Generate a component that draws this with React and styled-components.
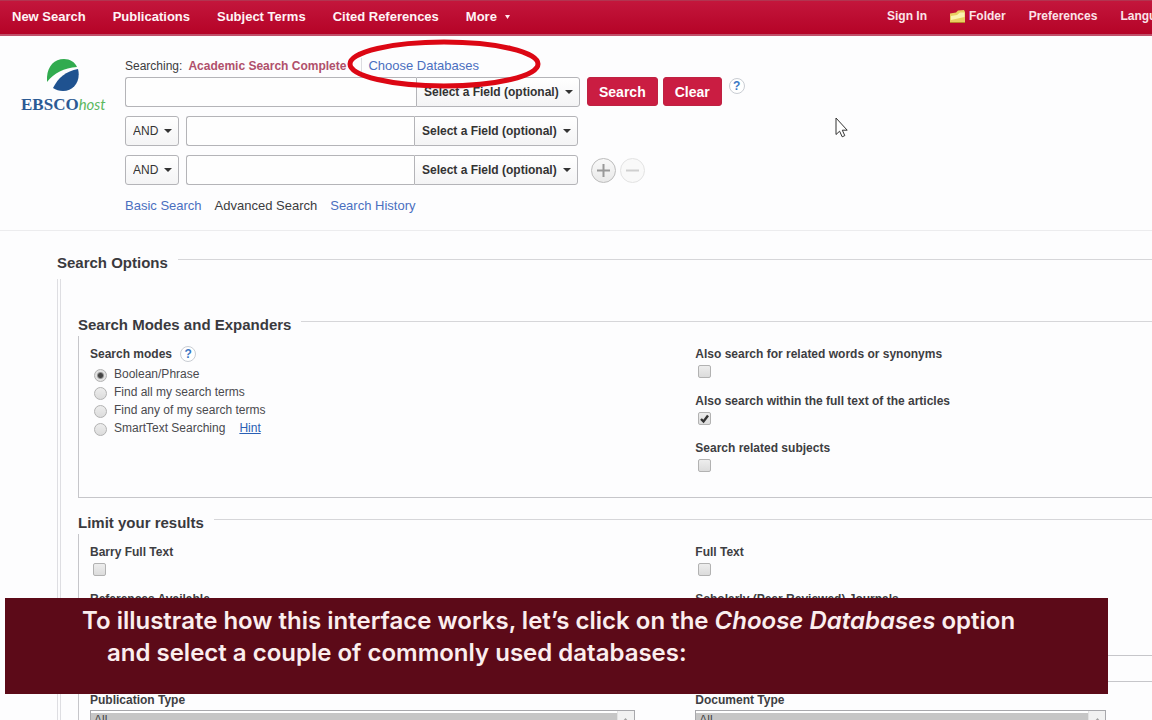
import React from "react";
import styled, { createGlobalStyle, css } from "styled-components";

const GlobalStyle = createGlobalStyle`
  *, *::before, *::after { box-sizing: border-box; }
  html { overflow-x: hidden; scrollbar-width: none; }
  body {
    margin: 0;
    background: #fdfdfe;
    color: #3c3c40;
    font-family: "Liberation Sans", Arial, sans-serif;
    font-size: 12px;
    line-height: 16px;
  }
  a { text-decoration: none; }
`;

const Page = styled.div`
  position: relative;
  overflow: hidden;
`;

const TopBar = styled.header`
  display: flex;
  height: 36px;
  padding-left: 12px;
  border-top: 1px solid #b23450;
  border-bottom: 2px solid #c0506a;
  background: linear-gradient(#c3163c, #b50327);
  white-space: nowrap;
  overflow: hidden;
`;

const MainNav = styled.nav`
  display: flex;
  flex: 1;
  align-items: center;
  gap: 27px;
  padding-bottom: 2px;
`;

const UserNav = styled.nav`
  display: flex;
  flex: none;
  align-items: center;
  gap: 23px;
  width: 265px;
  padding-bottom: 3px;
`;

const NavLink = styled.a`
  display: inline-flex;
  align-items: center;
  gap: ${(p) => (p.$small ? "4px" : "8px")};
  color: ${(p) => (p.$small ? "#fbe3e8" : "#fff4f6")};
  font-size: ${(p) => (p.$small ? "12px" : "13px")};
  font-weight: bold;
`;

const SearchArea = styled.section`
  display: flex;
  padding: 22px 0 16px;
  border-bottom: 1px solid #ececee;
`;

const LogoColumn = styled.div`
  flex: none;
  width: 125px;
  padding-left: 21px;
`;

const LogoText = styled.div`
  color: #2b5a94;
  font: bold 17px/20px "Liberation Serif", serif;
  white-space: nowrap;

  i {
    color: #5cb85f;
    font: italic 15px/20px Lato, sans-serif;
  }
`;

const LogoMark = styled.svg`
  display: block;
  margin: 0 0 3px 26px;
`;

const SearchForm = styled.form`
  display: flex;
  flex-direction: column;
`;

const SourceLine = styled.div`
  display: flex;
  margin-bottom: 3px;
  white-space: nowrap;

  b {
    margin-left: 6px;
    color: #b0506b;
  }
`;

const ChooseSlot = styled.span`
  position: relative;
  margin-left: 15px;
  padding-left: 6px;
  border-left: 1px solid #dcdce0;
`;

const Highlight = styled.svg`
  position: absolute;
  z-index: 2;
  left: -15px;
  top: -19px;
  pointer-events: none;
`;

const TextLink = styled.a`
  color: #4a6fc0;
  font-size: 13px;
`;

const QueryRows = styled.div`
  display: flex;
  flex-direction: column;
  gap: 9px;
`;

const QueryRow = styled.div`
  display: flex;
  height: 30px;
`;

const box = css`
  height: 30px;
  border: 1px solid #b4b4b8;
  font-family: inherit;
  font-size: 12px;
`;

const TermInput = styled.input`
  ${box}
  width: ${(p) => (p.$wide ? "291px" : "228px")};
  padding: 0 6px;
  border-right: 0;
  border-radius: 3px 0 0 3px;
  background: #fefefe;
  outline: none;
`;

const SelectWrap = styled.span`
  position: relative;
  display: inline-block;
  margin-right: 7px;

  &::after {
    content: "";
    position: absolute;
    right: 7px;
    top: 13px;
    border: 4px solid transparent;
    border-top-color: #333;
    border-bottom: 0;
    pointer-events: none;
  }
`;

const FieldSelect = styled.select`
  ${box}
  display: block;
  width: 164px;
  padding: 0 0 0 7px;
  border-radius: 0 3px 3px 0;
  background: linear-gradient(#fff, #f4f4f5);
  color: #333;
  font-weight: bold;
  appearance: none;
`;

const BoolSelect = styled(FieldSelect)`
  width: 54px;
  border-radius: 3px;
  font-weight: normal;
`;

const ActionButton = styled.button`
  height: 29px;
  margin-right: 5px;
  padding: 0 11px;
  border: 1px solid #bf2242;
  border-radius: 3px;
  background: #ca1d42;
  color: #fff;
  font: bold 14px/20px "Liberation Sans", Arial, sans-serif;
`;

const HelpButton = styled.button`
  flex: none;
  width: 16px;
  height: 16px;
  margin: ${(p) => (p.$inline ? "0 0 0 8px" : "1px 0 0 2px")};
  padding: 0;
  border: 1px solid #c9cdd3;
  border-radius: 50%;
  background: #fff;
  color: #3c78c4;
  font: bold 12px/14px "Liberation Sans", Arial, sans-serif;
`;

const RoundButton = styled.button`
  width: 25px;
  height: 25px;
  margin: 3px 4px 0 0;
  padding: 0;
  border: 1px solid ${(p) => (p.disabled ? "#e3e3e3" : "#bcbcbc")};
  border-radius: 50%;
  background: ${(p) => (p.disabled ? "#f9f9f9" : "linear-gradient(#f9f9f9, #e9e9e9)")};
  color: ${(p) => (p.disabled ? "#cfcfcf" : "#999")};

  svg { display: block; margin: auto; }
`;

const RoundButtons = styled.div`
  display: flex;
  margin-left: 6px;
`;

const ModeLinks = styled.nav`
  display: flex;
  gap: 13px;
  margin-top: 13px;
  font-size: 13px;
`;

const CurrentMode = styled.span`
  color: #3c3c40;
`;

const Options = styled.main`
  padding: 21px 0 0 57px;
`;

const OptionsBody = styled.div`
  margin-top: 5px;
  padding: 35px 0 0 17px;
  border-left: 4px double #dedee2;
`;

const Heading = styled.h2`
  display: flex;
  gap: 10px;
  margin: ${(p) => (p.$spaced ? "14px" : "0")} 0 0;
  color: #3a3a3e;
  font-size: 15px;
  line-height: 22px;

  &::after {
    content: "";
    flex: 1;
    height: 1px;
    margin-top: 7px;
    background: #d6d6d9;
  }
`;

const Panel = styled.section`
  display: grid;
  grid-template-columns: 57fr 43fr;
  margin-top: ${(p) => (p.$topLine ? "25px" : "0")};
  padding: 10px 0 ${(p) => p.$bottom || "25px"} 11px;
  border: solid #c6c6ca;
  border-width: ${(p) => (p.$topLine ? "1px 0 0 1px" : "0 0 1px 1px")};
`;

const Column = styled.div`
  display: flex;
  flex-direction: column;
  gap: ${(p) => (p.$tight ? "3px" : "15px")};
  min-width: 0;
`;

const Label = styled.label`
  display: block;
  color: #3e3e42;
  font-weight: bold;
`;

const TitleRow = styled.div`
  display: flex;
  font-weight: bold;
`;

const choice = css`
  display: block;
  appearance: none;
  width: 13px;
  height: 13px;
  border: 1px solid #b2b2b2;
  background: linear-gradient(#ededed, #dcdcdc);
`;

const CheckInput = styled.input.attrs({ type: "checkbox" })`
  ${choice}
  margin: 0;
  border-radius: 2px;
`;

const CheckBox = styled.span`
  position: relative;
  display: block;
  width: 13px;
  margin: 3px 0 0 3px;

  svg {
    position: absolute;
    left: 0;
    top: 0;
    display: none;
    pointer-events: none;
  }
  input:checked + svg { display: block; }
`;

const RadioInput = styled.input.attrs({ type: "radio" })`
  ${choice}
  margin: 2px 7px 0 4px;
  border-radius: 50%;

  &:checked {
    background: radial-gradient(circle, #444 0 2px, #e2e2e2 4px);
  }
`;

const RadioList = styled.div`
  display: flex;
  flex-direction: column;
`;

const RadioRow = styled.div`
  display: flex;
  align-items: center;
  height: 18px;
  color: #4a4a4e;
`;

const HintLink = styled.a`
  margin-left: 14px;
  color: #2a5fb4;
  text-decoration: underline;
`;

const ListBox = styled.div`
  display: flex;
  width: 90%;
  height: 70px;
  margin-top: 2px;
  border: 1px solid #a8a8ac;
  background: #fff;
`;

const List = styled.select`
  flex: 1;
  min-width: 0;
  padding: 2px 0 0;
  border: 0;
  background: #fff;
  font: 12px/16px "Liberation Sans", Arial, sans-serif;
  scrollbar-width: none;

  option {
    padding: 0 3px;
    background: #c6c6c6;
    color: #444;
  }
`;

const ScrollButton = styled.button`
  display: flex;
  justify-content: center;
  width: 17px;
  padding: 7px 0 0;
  border: 0;
  border-left: 1px solid #e2e2e2;
  background: #f1f1f1;
`;

const Caption = styled.aside`
  position: fixed;
  z-index: 3;
  left: 5px;
  right: 44px;
  bottom: 26px;
  padding: 7px 40px 25px 102px;
  background: #5c0a18;
  color: #fbeeee;
  font: 600 24px/32px Inter, sans-serif;

  p {
    margin: 0;
    text-indent: -25px;
  }
`;

const Pointer = styled.svg`
  position: absolute;
  left: 835px;
  top: 117px;
`;

function FieldPicker({ id }) {
  return (
    <SelectWrap>
      <FieldSelect id={id} aria-label="Select a Field">
        <option>Select a Field (optional)</option>
      </FieldSelect>
    </SelectWrap>
  );
}

function BoolPicker() {
  return (
    <SelectWrap>
      <BoolSelect aria-label="Operator">
        <option>AND</option>
      </BoolSelect>
    </SelectWrap>
  );
}

function Check({ id, label, checked }) {
  return (
    <div>
      <Label htmlFor={id}>{label}</Label>
      <CheckBox>
        <CheckInput id={id} defaultChecked={checked} />
        <svg width="13" height="13" viewBox="0 0 13 13">
          <path d="M3 7l2.5 2.5L10 3.5" fill="none" stroke="#333" strokeWidth="2.4" />
        </svg>
      </CheckBox>
    </div>
  );
}

function TypeList({ id, label }) {
  return (
    <div>
      <Label htmlFor={id}>{label}</Label>
      <ListBox>
        <List id={id} size={4} defaultValue="All">
          <option>All</option>
        </List>
        <ScrollButton type="button" aria-label="Scroll up">
          <svg width="7" height="4" viewBox="0 0 7 4">
            <path d="M0 4L3.5 0L7 4z" fill="#a0a0a0" />
          </svg>
        </ScrollButton>
      </ListBox>
    </div>
  );
}

const modes = [
  "Boolean/Phrase",
  "Find all my search terms",
  "Find any of my search terms",
  "SmartText Searching",
];

export default function App() {
  return (
    <Page>
      <GlobalStyle />
      <TopBar>
        <MainNav>
          <NavLink href="#new">New Search</NavLink>
          <NavLink href="#publications">Publications</NavLink>
          <NavLink href="#subjects">Subject Terms</NavLink>
          <NavLink href="#references">Cited References</NavLink>
          <NavLink href="#more">
            More
            <svg width="5" height="4" viewBox="0 0 5 4">
              <path d="M0 0h5L2.5 4z" fill="#ffe9ee" />
            </svg>
          </NavLink>
        </MainNav>
        <UserNav>
          <NavLink $small href="#signin">Sign In</NavLink>
          <NavLink $small href="#folder">
            <svg width="15" height="13" viewBox="0 0 15 13">
              <path d="M0 3.5L6 2.5L8 0.5L14 0L15 2V12L0 13z" fill="#e9cf62" />
              <path d="M1 6L7 5L10 2.5L14.5 2.5V7L1 10z" fill="#fbf3b0" />
              <path d="M0 12h15v1H0z" fill="#b98a2a" />
            </svg>
            Folder
          </NavLink>
          <NavLink $small href="#preferences">Preferences</NavLink>
          <NavLink $small href="#languages">Languages</NavLink>
        </UserNav>
      </TopBar>

      <SearchArea>
        <LogoColumn>
          <LogoMark width="32" height="33" viewBox="0 0 32 33">
            <path d="M0 24C-1 10 6 1 17 1C23 1 28 4 30 9C17 10 7 15 0 24z" fill="#31ab4f" />
            <path d="M31 11C34 23 27 33 16 33C12 33 9 32 6 30C11 20 19 13 31 11z" fill="#1f5290" />
          </LogoMark>
          <LogoText>EBSCO<i>host</i></LogoText>
        </LogoColumn>

        <SearchForm onSubmit={(e) => e.preventDefault()}>
          <SourceLine>
            <span>Searching:</span>
            <b>Academic Search Complete</b>
            <ChooseSlot>
              <TextLink href="#databases">Choose Databases</TextLink>
              <Highlight width="194" height="50" viewBox="0 0 194 50">
                <ellipse cx="97" cy="25" rx="94" ry="22" fill="none" stroke="#dc0714" strokeWidth="5" />
              </Highlight>
            </ChooseSlot>
          </SourceLine>
          <QueryRows>
            <QueryRow>
              <TermInput $wide aria-label="Search term 1" />
              <FieldPicker id="field1" />
              <ActionButton type="submit">Search</ActionButton>
              <ActionButton type="reset">Clear</ActionButton>
              <HelpButton type="button">?</HelpButton>
            </QueryRow>
            <QueryRow>
              <BoolPicker />
              <TermInput aria-label="Search term 2" />
              <FieldPicker id="field2" />
            </QueryRow>
            <QueryRow>
              <BoolPicker />
              <TermInput aria-label="Search term 3" />
              <FieldPicker id="field3" />
              <RoundButtons>
                <RoundButton type="button" aria-label="Add row">
                  <svg width="13" height="13" viewBox="0 0 13 13">
                    <path d="M6.5 0v13M0 6.5h13" stroke="currentColor" strokeWidth="2" />
                  </svg>
                </RoundButton>
                <RoundButton type="button" aria-label="Remove row" disabled>
                  <svg width="13" height="13" viewBox="0 0 13 13">
                    <path d="M0 6.5h13" stroke="currentColor" strokeWidth="2" />
                  </svg>
                </RoundButton>
              </RoundButtons>
            </QueryRow>
          </QueryRows>
          <ModeLinks>
            <TextLink href="#basic">Basic Search</TextLink>
            <CurrentMode>Advanced Search</CurrentMode>
            <TextLink href="#history">Search History</TextLink>
          </ModeLinks>
        </SearchForm>
      </SearchArea>

      <Options>
        <Heading>Search Options</Heading>
        <OptionsBody>
          <Heading>Search Modes and Expanders</Heading>
          <Panel>
            <Column $tight>
              <TitleRow>
                Search modes
                <HelpButton $inline type="button">?</HelpButton>
              </TitleRow>
              <RadioList>
                {modes.map((mode, i) => (
                  <RadioRow key={mode}>
                    <RadioInput id={`mode${i}`} name="mode" defaultChecked={i === 0} />
                    <label htmlFor={`mode${i}`}>{mode}</label>
                    {i === 3 && <HintLink href="#hint">Hint</HintLink>}
                  </RadioRow>
                ))}
              </RadioList>
            </Column>
            <Column>
              <Check id="related" label="Also search for related words or synonyms" />
              <Check id="within" label="Also search within the full text of the articles" checked />
              <Check id="subjects" label="Search related subjects" />
            </Column>
          </Panel>

          <Heading $spaced>Limit your results</Heading>
          <Panel $bottom="32px">
            <Column>
              <Check id="barry" label="Barry Full Text" />
              <Check id="refs" label="References Available" />
            </Column>
            <Column>
              <Check id="full" label="Full Text" />
              <Check id="peer" label="Scholarly (Peer Reviewed) Journals" />
            </Column>
          </Panel>

          <Panel $topLine>
            <TypeList id="pubtype" label="Publication Type" />
            <TypeList id="doctype" label="Document Type" />
          </Panel>
        </OptionsBody>
      </Options>

      <Pointer width="13" height="21" viewBox="0 0 13 21">
        <path d="M1 1V17.5L4.6 14.2L7.2 19.8L9.8 18.6L7.3 13.2H12.2z" fill="#fff" stroke="#333" strokeWidth="1" />
      </Pointer>

      <Caption>
        <p>
          To illustrate how this interface works, let’s click on the <em>Choose Databases</em> option
          <br />
          and select a couple of commonly used databases:
        </p>
      </Caption>
    </Page>
  );
}
